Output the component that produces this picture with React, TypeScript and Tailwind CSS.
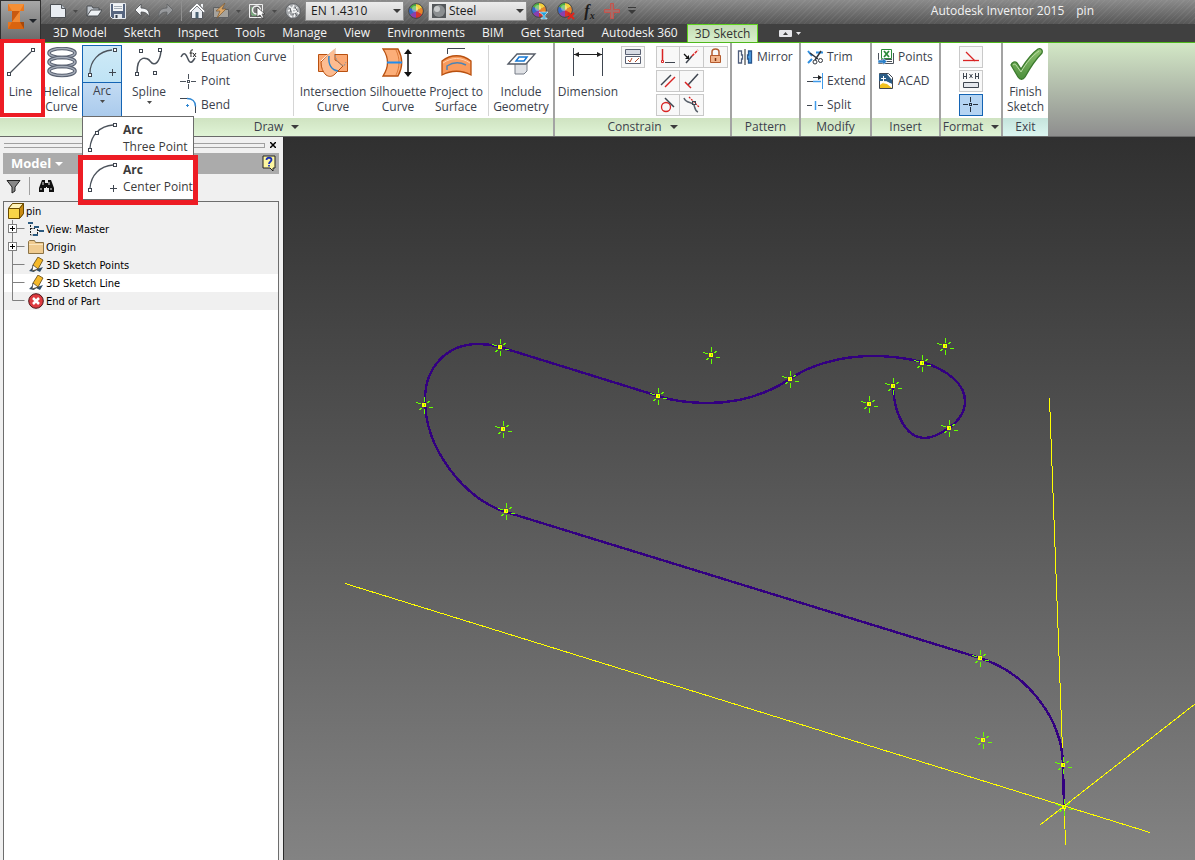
import type { ReactNode } from "react";

type IconProps = { children: ReactNode; w?: number; h?: number };

/** Bare svg wrapper, one unit = one pixel. */
function Icon({ children, w = 16, h = 16 }: IconProps) {
  return (
    <svg width={w} height={h} viewBox={`0 0 ${w} ${h}`} fill="none" className="shrink-0" aria-hidden="true">
      {children}
    </svg>
  );
}

function Caret({ className = "text-[#3c3c3c]" }: { className?: string }) {
  return (
    <svg width="8" height="4" viewBox="0 0 8 4" className={`shrink-0 ${className}`} aria-hidden="true">
      <path d="M0 0h8L4 4z" fill="currentColor" />
    </svg>
  );
}

function SmallCaret({ className = "text-[#4a4a4a]" }: { className?: string }) {
  return (
    <svg width="5" height="3" viewBox="0 0 5 3" className={`shrink-0 ${className}`} aria-hidden="true">
      <path d="M0 0h5L2.5 3z" fill="currentColor" />
    </svg>
  );
}

/* ---------- quick access icons ---------- */

function ColorWheel({ badge }: { badge?: "filter" | "clear" }) {
  const size = badge ? 18 : 16;
  return (
    <Icon w={size} h={size}>
      <path d="M8 8V1a7 7 0 0 1 6 3.5z" fill="#f4d13a" />
      <path d="M8 8l6-3.5a7 7 0 0 1 0 7z" fill="#e8862a" />
      <path d="M8 8l6 3.5A7 7 0 0 1 8 15z" fill="#d8342c" />
      <path d="M8 8v7a7 7 0 0 1-6-3.5z" fill="#8a3fb0" />
      <path d="M8 8l-6 3.5a7 7 0 0 1 0-7z" fill="#3569c9" />
      <path d="M8 8L2 4.5A7 7 0 0 1 8 1z" fill="#4caf3f" />
      <circle cx="8" cy="8" r="7.4" stroke="#3c3c3c" strokeWidth="0.8" />
      <circle cx="7" cy="6" r="3" fill="#fff" opacity="0.35" />
      {badge === "filter" && (
        <path d="M8 10h9l-3 3v3h2v1h-6v-1h2v-3z" fill="#25a5de" stroke="#e9f6fc" strokeWidth="0.6" />
      )}
      {badge === "clear" && <path d="M11 11l6 6M17 11l-6 6" stroke="#e2231a" strokeWidth="2" />}
    </Icon>
  );
}

const quickIcons: Record<string, ReactNode> = {
  New: (
    <Icon>
      <path d="M0.5 1.5h11l4 4v9h-15z" fill="#e9edf2" stroke="#4b4e52" />
      <path d="M11.5 1.5v4h4" stroke="#55585c" fill="#b9c0c8" />
    </Icon>
  ),
  Open: (
    <Icon>
      <path d="M1 13V3h5l1 2h6v3" fill="#c3c9d0" stroke="#4b4e52" />
      <path d="M1 13l4-6h11l-4 6z" fill="#eef1f4" stroke="#4b4e52" />
    </Icon>
  ),
  Save: (
    <Icon>
      <path d="M0.5 0.5h15v15h-13l-2-2z" fill="#56657f" stroke="#e8ebef" />
      <path d="M3 1h10v7H3z" fill="#f2f4f6" />
      <path d="M4 3.5h8M4 5.5h8" stroke="#a3abb5" />
      <path d="M4 11h8v4H4z" fill="#dfe4ea" />
      <path d="M5.5 12h2v3h-2z" fill="#333c4b" />
    </Icon>
  ),
  Undo: (
    <Icon>
      <path d="M1 7l6-6v4c6 0 9 3 8 9-1-3-3-5-8-5v4z" fill="#f4f6f8" stroke="#4b4e52" strokeWidth="0.8" />
    </Icon>
  ),
  Redo: (
    <Icon>
      <path d="M15 7L9 1v4c-6 0-9 3-8 9 1-3 3-5 8-5v4z" fill="#97999c" stroke="#606265" strokeWidth="0.8" />
    </Icon>
  ),
  Home: (
    <Icon>
      <path d="M2.5 8v7.500h11V8L8 3z" fill="#e9ecf1" stroke="#54585e" />
      <path d="M8 0L0 8l1 2 7-7 7 7 1-2z" fill="#fff" stroke="#54585e" strokeWidth="0.6" />
      <path d="M12 1h2v4l-2-2z" fill="#f2f4f7" />
      <path d="M6.5 9h3v6h-3z" fill="#4b6273" />
    </Icon>
  ),
  Update: (
    <Icon>
      <path d="M0.500 4.5h6l1 2h8v8h-15z" fill="#a5a29c" stroke="#5e6063" />
      <path d="M12 0L3 8h4l-3 7 9-9H9z" fill="#dda867" stroke="#7b5a34" strokeWidth="0.7" />
    </Icon>
  ),
  Select: (
    <Icon>
      <path d="M0.5 1.5h13v13h-13z" stroke="#f0f0f0" />
      <path d="M3 4v8h6" stroke="#7fd486" />
      <circle cx="7.5" cy="7" r="4" stroke="#f3f3f3" strokeWidth="1.5" />
      <path d="M8 4l8 7h-3l2 4h-2l-2-3-3 2z" fill="#fff" stroke="#333" strokeWidth="0.7" />
    </Icon>
  ),
  Material: (
    <Icon>
      <circle cx="8" cy="8" r="7.400" fill="#a8abae" stroke="#55585c" strokeWidth="0.8" />
      <path
        d="M4 3l3 3M9 2L7 6l5 1M3 8l4-2 1 4-4 2M8 10l4-2 2 3M9 14l1-3M12 4l-1 3M5 13l2 1"
        stroke="#f3f4f5"
        strokeWidth="1.5"
      />
      <path d="M5 5l1 4M10 4l3 5M5 11h4M10 10l2 3" stroke="#5e6266" />
    </Icon>
  ),
  Appearance: <ColorWheel />,
};

function QuickButton({ name, caret }: { name: string; caret?: boolean }) {
  return (
    <button type="button" aria-label={name} className="flex h-5 items-center gap-[7px]">
      {quickIcons[name]}
      {caret && <SmallCaret />}
    </button>
  );
}

function ComboBox({ label, value, swatch }: { label: string; value: string; swatch?: boolean }) {
  return (
    <div className="relative flex h-5 w-[99px] items-center border border-[#8d8d8d] bg-gradient-to-b from-[#ececec] to-[#cfcfcf]">
      {swatch && (
        <svg width="14" height="14" viewBox="0 0 14 14" className="ml-[3px] shrink-0" aria-hidden="true">
          <rect width="14" height="14" fill="#55585b" />
          <circle cx="7" cy="7" r="6" fill="#8b8e90" />
          <circle cx="5" cy="5" r="3" fill="#c9cbcc" />
        </svg>
      )}
      <select
        aria-label={label}
        className={`h-4 w-full appearance-none bg-transparent text-xs leading-4 text-[#1c1c1c] outline-none ${swatch ? "pl-[3px]" : "pl-[5px]"}`}
      >
        <option>{value}</option>
      </select>
      <span className="pointer-events-none absolute top-[7px] right-0.5">
        <Caret />
      </span>
    </div>
  );
}

function QuickAccessBar() {
  return (
    <div className="flex h-6 items-center bg-[repeating-linear-gradient(135deg,rgba(255,255,255,0.05)_0px,rgba(255,255,255,0.05)_1px,transparent_1px,transparent_4px),linear-gradient(#8b8b8b,#565656)] pb-0.5 pl-[9px]">
      <div className="flex items-center gap-2">
        <QuickButton name="New" caret />
        <QuickButton name="Open" />
        <QuickButton name="Save" />
        <QuickButton name="Undo" />
        <QuickButton name="Redo" />
        <span className="-mx-px h-5 w-px bg-[#8f8f8f]" />
        <QuickButton name="Home" />
        <QuickButton name="Update" caret />
        <QuickButton name="Select" caret />
        <QuickButton name="Material" />
      </div>
      <div className="ml-1 flex items-center gap-1">
        <ComboBox label="Material" value="EN 1.4310" />
        <QuickButton name="Appearance" />
        <ComboBox label="Appearance" value="Steel" swatch />
      </div>
      <div className="ml-1 flex items-center gap-2">
        <button type="button" aria-label="Adjust">
          <ColorWheel badge="filter" />
        </button>
        <button type="button" aria-label="Clear">
          <ColorWheel badge="clear" />
        </button>
        <button
          type="button"
          className="w-[13px] font-['Liberation_Serif',serif] text-base leading-4 font-bold text-[#1c1c1c] italic"
        >
          f<sub className="text-[10px]">x</sub>
        </button>
        <button type="button" aria-label="Add">
          <Icon>
            <path d="M6.5 0.5h3v6h6v3h-6v6h-3v-6h-6v-3h6z" fill="#a0706c" stroke="#c4534c" />
          </Icon>
        </button>
        <button type="button" aria-label="More">
          <Icon w={8} h={8}>
            <path d="M0 0.5h8" stroke="#3a3a3a" />
            <path d="M0 3h8L4 7z" fill="#3a3a3a" />
          </Icon>
        </button>
      </div>
      <p className="mr-[101px] ml-auto flex gap-3 text-xs whitespace-nowrap text-[#f2f2f2]">
        <span>Autodesk Inventor 2015</span>
        <span>pin</span>
      </p>
    </div>
  );
}

const tabs = [
  "3D Model",
  "Sketch",
  "Inspect",
  "Tools",
  "Manage",
  "View",
  "Environments",
  "BIM",
  "Get Started",
  "Autodesk 360",
];

function TabBar() {
  return (
    <nav className="flex h-[18px] items-end gap-px bg-[#404040] pl-1 text-xs text-[#f4f4f4]">
      {tabs.map((tab) => (
        <button key={tab} type="button" className="h-[18px] px-2 leading-[18px] whitespace-nowrap">
          {tab}
        </button>
      ))}
      <button
        type="button"
        className="h-[18px] border border-b-0 border-[#5fd41f] bg-gradient-to-b from-[#c3dcb4] to-[#daf0cd] px-[7px] leading-4 whitespace-nowrap text-[#333]"
      >
        3D Sketch
      </button>
      <button type="button" aria-label="Minimize ribbon" className="ml-5 flex h-[18px] items-center gap-1">
        <Icon w={13} h={7}>
          <rect width="13" height="7" rx="1" fill="#e6e6ea" />
          <path d="M4 5h5L6.5 2z" fill="#404040" />
        </Icon>
        <SmallCaret className="text-[#e6e6ea]" />
      </button>
    </nav>
  );
}

/* ---------- ribbon ---------- */

const node = { fill: "#fff", stroke: "#3f4650" };

const bigIcons: Record<string, ReactNode> = {
  Line: (
    <Icon w={32} h={32}>
      <path d="M5 26L26 5" stroke="#4c535c" strokeWidth="1.3" />
      <rect x="2.5" y="25.5" width="3" height="3" {...node} />
      <rect x="26.5" y="1.5" width="3" height="3" {...node} />
    </Icon>
  ),
  "Helical Curve": (
    <Icon w={32} h={32}>
      {[6, 15, 24].map((y) => (
        <g key={y}>
          <ellipse cx="16" cy={y} rx="13" ry="4.5" stroke="#596171" strokeWidth="3.6" />
          <ellipse cx="16" cy={y} rx="13" ry="4.5" stroke="#a4abb7" strokeWidth="1.4" />
        </g>
      ))}
    </Icon>
  ),
  Arc: (
    <Icon w={32} h={32}>
      <path d="M4 26C4 14 13 4 26 3" stroke="#4c535c" strokeWidth="1.3" />
      <rect x="2.5" y="26.5" width="3" height="3" {...node} />
      <rect x="27.5" y="1.5" width="3" height="3" {...node} />
      <path d="M23 25.5h7M26.5 22v7" stroke="#3f4650" />
    </Icon>
  ),
  Spline: (
    <Icon w={32} h={32}>
      <path d="M4 26c0-20 11-15 13-12 5 7 10 0 11-10" stroke="#4c535c" strokeWidth="1.5" />
      <rect x="2.5" y="25.5" width="3" height="3" {...node} />
      <rect x="6.5" y="2.5" width="3" height="3" {...node} />
      <rect x="20.5" y="24.5" width="3" height="3" {...node} />
      <rect x="25.5" y="1.5" width="3" height="3" {...node} />
    </Icon>
  ),
  "Intersection Curve": (
    <Icon w={32} h={32}>
      <path d="M1.5 7.5h29v17h-29z" fill="#fba974" stroke="#b8500f" />
      <path d="M4 15L18 1v12c3 1 5 4 8 6l-8 8c-3 3-6 3-9 1-3-3-5-7-5-13z" fill="#fdbc91" stroke="#b8500f" />
      <path d="M4 14L18 1v6" stroke="#fff" />
      <path d="M12 9c-1 9 3 14 9 15" stroke="#2c85cc" strokeWidth="1.5" />
      <path d="M18 8c1 5 4 9 9 11l2-4" stroke="#8d959c" strokeDasharray="2 1" />
    </Icon>
  ),
  "Silhouette Curve": (
    <Icon w={32} h={32}>
      <path d="M1 2h15c5 9 5 18 0 27H1c6-9 6-18 0-27z" fill="#fcae78" stroke="#b8500f" strokeWidth="1.3" />
      <path d="M14 3c4 8 4 17 0 25" stroke="#dc7b3b" />
      <path d="M5 15.5h15" stroke="#1e8df0" strokeWidth="2" />
      <path d="M26 5v22" stroke="#111" strokeWidth="1.5" />
      <path d="M22 7l4-5 4 5zM22 25l4 5 4-5z" fill="#111" />
    </Icon>
  ),
  "Project to Surface": (
    <Icon w={32} h={32}>
      <path d="M7.5 7V1.5H25" stroke="#3f4650" />
      <path d="M2 14c9-7 20-7 29 0v14c-9-5-20-5-29 0z" fill="#f99b5d" stroke="#b8500f" strokeWidth="1.3" />
      <path d="M3 16c9-6 18-6 27 0" stroke="#ffd2b0" />
      <path d="M7 23v-4c6-4 13-4 19-1" stroke="#4d84b4" strokeWidth="1.5" />
    </Icon>
  ),
  "Include Geometry": (
    <Icon w={32} h={32}>
      <path d="M10 16h12v8l-3 3h-9z" fill="#dfe1e5" stroke="#777d87" />
      <path d="M3 17L12 7h18l-9 10z" fill="#fff" stroke="#555c67" strokeWidth="1.3" />
      <path d="M11 14l3-4h8l-3 4z" stroke="#1678d4" strokeWidth="1.5" />
    </Icon>
  ),
  Dimension: (
    <Icon w={32} h={32}>
      <path d="M1.5 1v28M30.5 1v28" stroke="#3f4650" />
      <path d="M2 7.5h28" stroke="#222" />
      <path d="M2 7.5L7 5v5zM30 7.5L25 5v5z" fill="#222" />
    </Icon>
  ),
  "Finish Sketch": (
    <Icon w={34} h={34}>
      <defs>
        <linearGradient id="tick" x1="0" y1="0" x2="0" y2="1">
          <stop offset="0" stopColor="#8cc06d" />
          <stop offset="1" stopColor="#4c8f3c" />
        </linearGradient>
      </defs>
      <path
        d="M2 18c1-3 4-4 6-2l4 6C17 14 22 7 29 2c3-1 5 1 4 4C26 13 21 21 16 30c-2 3-5 3-7 0z"
        fill="url(#tick)"
        stroke="#3b7a2d"
        strokeWidth="1.3"
      />
      <path d="M4 18c1-1 2-1 3 0l5 7C17 16 23 9 30 4" stroke="#b9dba4" />
    </Icon>
  ),
};

function BigButton({ name, width, caret }: { name: string; width: string; caret?: boolean }) {
  return (
    <button type="button" className={`flex shrink-0 flex-col items-center pt-1 ${width}`}>
      <span className="flex h-[37px] items-start">{bigIcons[name]}</span>
      <span className="text-xs leading-[15px] text-[#3b3f4c]">{name}</span>
      {caret && (
        <span className="pt-0.5">
          <SmallCaret />
        </span>
      )}
    </button>
  );
}

const rowIcons: Record<string, ReactNode> = {
  "Equation Curve": (
    <Icon w={17}>
      <path d="M1 8c3-6 5-3 7 2s4 4 7-1" stroke="#4c535c" strokeWidth="1.5" />
      <path d="M13 1c-3-1-2 2-2 7M9.5 4h3M13 4l3 4M16 4l-3 4" stroke="#222" />
    </Icon>
  ),
  Point: (
    <Icon w={17}>
      <path d="M0 8.5h6M11 8.5h5M8.5 1v5M8.5 11v5" stroke="#4c535c" />
      <rect x="7.5" y="7.5" width="2" height="2" stroke="#4c535c" />
    </Icon>
  ),
  Bend: (
    <Icon w={17}>
      <path d="M0 1.5h7M15.5 9v7" stroke="#3f4650" />
      <path d="M7 1.5c5 0 8.5 3 8.5 8" stroke="#2f86d2" strokeWidth="1.5" />
      <path d="M6 8.5h3M7.5 7v3" stroke="#2f86d2" />
    </Icon>
  ),
  Mirror: (
    <Icon>
      <path d="M1.5 2h3v4h1v4h-1v4h-3z" stroke="#4f5e7c" strokeWidth="1.3" />
      <path d="M8 0v16" stroke="#222" />
      <path d="M14.5 2h-3v4h-1v4h1v4h3z" fill="#4b9be0" stroke="#27568f" strokeWidth="1.3" />
    </Icon>
  ),
  Trim: (
    <Icon>
      <path d="M1 2l4 5M9 3.5h7M1 14l4-4" stroke="#2f8fe0" strokeWidth="2" />
      <path d="M3 4l8 6M14 2L8 11" stroke="#30353c" strokeWidth="1.5" />
      <circle cx="8" cy="13" r="2" stroke="#30353c" />
      <circle cx="13.5" cy="11.5" r="2" stroke="#30353c" />
    </Icon>
  ),
  Extend: (
    <Icon>
      <path d="M0 8.5h6M6 4.5h6" stroke="#3f4650" />
      <path d="M6 8.5h8" stroke="#3f9bea" strokeWidth="1.5" />
      <path d="M11 2l4 2.5L11 7z" fill="#222" />
      <path d="M15.5 0v16" stroke="#3f9bea" />
    </Icon>
  ),
  Split: (
    <Icon>
      <path d="M0 8.5h5M11 8.5h5" stroke="#3f4650" />
      <path d="M8.5 4v9" stroke="#3f9bea" strokeWidth="1.5" />
    </Icon>
  ),
  Points: (
    <Icon>
      <path d="M0.5 4v10.500h15V4M3 10.5h11M3 12.5h11" stroke="#4c535c" />
      <path d="M3.5 0.5h10v9h-10z" fill="#fff" stroke="#2b8a3a" />
      <path d="M6 2l5 6M11 2L6 8" stroke="#2b8a3a" strokeWidth="1.8" />
      <path d="M0 11h5V9l4 3.500-4 3.500v-2H0z" fill="#2c7fc8" stroke="#fff" strokeWidth="0.5" />
    </Icon>
  ),
  ACAD: (
    <Icon>
      <path d="M1.5 0.5h9l4 4v11h-13z" fill="#fff" stroke="#3f4650" />
      <path d="M1 1h8l5 6v4L6 8H1z" fill="#2b5d86" />
      <path d="M2 12l4-3 8 3v3H2z" fill="#f1c21f" />
      <path d="M4 10l5 1 5 4V11L8 8z" fill="#fff" />
      <path d="M3 5.500h5M5.5 3v5" stroke="#fff" />
    </Icon>
  ),
};

function RowButton({ name }: { name: string }) {
  return (
    <button type="button" className="flex h-6 items-center gap-1 text-xs whitespace-nowrap text-[#3b3f4c]">
      {rowIcons[name]}
      {name}
    </button>
  );
}

const toolIcons: Record<string, ReactNode> = {
  Constraints: (
    <>
      <path d="M4.5 3.5h15v5h-15z" fill="#d8dce4" stroke="#596072" />
      <path d="M4.5 10.5h15v7h-15z" fill="#fff" stroke="#596072" />
      <path d="M7 14l2 2 2-4M14 16l4-4" stroke="#b04a2a" />
    </>
  ),
  Coincident: (
    <>
      <path d="M6.5 3v11" stroke="#d92323" strokeWidth="1.5" />
      <path d="M5.5 14.5h2v2h-2z" stroke="#d92323" />
      <path d="M9 16.5h10" stroke="#3f4650" />
    </>
  ),
  Collinear: (
    <>
      <path d="M6 17l6-7" stroke="#3f4650" strokeWidth="1.5" />
      <path d="M12 10l6-6" stroke="#d92323" strokeWidth="1.5" strokeDasharray="3 1" />
      <path d="M4 8l4 4" stroke="#111" strokeWidth="1.3" />
      <path d="M9 9v4H5z" fill="#111" />
    </>
  ),
  Fix: (
    <>
      <path d="M8 10V6c0-4 7-4 7 0v4" stroke="#b45a2d" strokeWidth="1.5" />
      <path d="M6.5 9.5h10v7h-10z" fill="#f2b48c" stroke="#b45a2d" />
      <path d="M11.5 12v3" stroke="#7c3510" strokeWidth="1.5" />
    </>
  ),
  Parallel: (
    <>
      <path d="M5 15L15 5" stroke="#3f4650" strokeWidth="1.5" />
      <path d="M9 17L19 7" stroke="#d92323" strokeWidth="1.5" />
    </>
  ),
  Perpendicular: (
    <>
      <path d="M8 15L18 4" stroke="#3f4650" strokeWidth="1.5" />
      <path d="M5 12l6 6" stroke="#d92323" strokeWidth="1.5" />
    </>
  ),
  Tangent: (
    <>
      <circle cx="10" cy="13" r="4.5" stroke="#d92323" strokeWidth="1.3" />
      <path d="M9 4l9 9" stroke="#3f4650" strokeWidth="1.5" />
    </>
  ),
  Smooth: (
    <>
      <path d="M4 4c2 6 8 3 10 7 1 3 1 6 4 7" stroke="#5a616b" strokeWidth="1.5" />
      <path d="M9 3l10 10" stroke="#d92323" strokeWidth="1.3" strokeDasharray="2 1" />
      <rect x="12.5" y="7.5" width="3" height="3" stroke="#3f4650" />
    </>
  ),
  Construction: (
    <>
      <path d="M4 14.5h16" stroke="#d92323" strokeWidth="1.3" />
      <path d="M7 6l9 9" stroke="#d92323" strokeWidth="1.3" />
    </>
  ),
  "Driven Dimension": (
    <>
      <path d="M4.5 3v6M4.5 6.5h3M7.5 3v6M19.5 3v6M16.5 6.5h3M16.5 3v6M10.5 4l3 4M13.5 4l-3 4" stroke="#3f4650" />
      <path d="M4.5 12.5h15v5h-15z" fill="#e4e7ec" stroke="#3f4650" />
    </>
  ),
  "Center Point": (
    <>
      <path d="M4 10.5h5M14 10.5h5M11.5 3v5M11.5 13v5" stroke="#25303d" />
      <rect x="10.5" y="9.5" width="2" height="2" stroke="#25303d" />
    </>
  ),
};

function ToolButton({ name, active, joined }: { name: string; active?: boolean; joined?: boolean }) {
  const tone = active ? "border-[#1464b4] bg-[#b5d4f2]" : "border-[#c9c9c9] bg-[#f8f8f8]";
  return (
    <button
      type="button"
      aria-label={name}
      className={`flex h-[22px] w-6 items-center justify-center border ${tone} ${joined ? "border-l-0" : ""}`}
    >
      <Icon w={22} h={20}>
        <g transform="translate(-1 -1)">{toolIcons[name]}</g>
      </Icon>
    </button>
  );
}

type PanelProps = { title: string; width: string; caret?: boolean; exit?: boolean; children: ReactNode };

function Panel({ title, width, caret, exit, children }: PanelProps) {
  return (
    <section className={`flex shrink-0 flex-col bg-white ${exit ? "" : "border-r-2 border-[#a3a3a3]"} ${width}`}>
      <div className="flex h-[75px]">{children}</div>
      <h2
        className={`flex h-[18px] items-center justify-center gap-2 text-xs text-[#3b3f4c] ${
          exit ? "bg-gradient-to-b from-[#c5e4dc] to-[#dcf6f0]" : "bg-gradient-to-b from-[#cfe3c1] to-[#e0f4d6]"
        }`}
      >
        {title}
        {caret && <Caret />}
      </h2>
    </section>
  );
}

function ArcMenuItem({ label, center }: { label: string; center?: boolean }) {
  return (
    <button type="button" role="menuitem" className="flex h-10 w-full items-center gap-1 pl-1 text-left text-xs">
      <Icon w={32} h={32}>
        <path d="M3 26C4 13 13 4 26 3" stroke="#4c535c" strokeWidth="1.3" />
        <rect x="1.5" y="26.5" width="3" height="3" {...node} />
        <rect x="26.5" y="1.5" width="3" height="3" {...node} />
        {center ? (
          <path d="M23 26.5h7M26.5 23v7" stroke="#3f4650" />
        ) : (
          <rect x="8.5" y="9.5" width="3" height="3" {...node} />
        )}
      </Icon>
      <span className="leading-[17px] whitespace-nowrap">
        <b className="block">Arc</b>
        {label}
      </span>
    </button>
  );
}

function ArcSplitButton() {
  return (
    <div className="relative mt-0.5 flex h-[73px] w-10 shrink-0 flex-col border border-b-0 border-[#1464b4]">
      <button
        type="button"
        aria-label="Arc center point"
        className="flex h-[37px] items-start justify-center border-b border-[#1464b4] bg-gradient-to-b from-[#cfeaf7] to-[#bfe3f5] pt-px"
      >
        {bigIcons.Arc}
      </button>
      <button
        type="button"
        className="flex flex-1 flex-col items-center bg-gradient-to-b from-[#c3dbf3] to-[#a9caec] text-xs leading-[15px] text-[#3b3f4c]"
      >
        Arc
        <span className="pt-0.5">
          <SmallCaret />
        </span>
      </button>
      <div
        role="menu"
        className="absolute top-[70px] -left-px z-20 w-28 border border-[#6b6b6b] bg-white py-px text-[#3b3b3b]"
      >
        <ArcMenuItem label="Three Point" />
        <ArcMenuItem label="Center Point" center />
        <span className="pointer-events-none absolute -inset-x-[5px] top-[38px] -bottom-1.5 border-5 border-[#ed1c24]" />
      </div>
    </div>
  );
}

function Ribbon() {
  return (
    <div className="relative flex h-[94px] border-t border-[#4fb81c] bg-gradient-to-b from-[#d3e8c6] to-[#8e8e8e]">
      <Panel title="Draw" width="w-[555px]" caret>
        <div className="relative flex">
          <BigButton name="Line" width="w-[41px]" />
          <span className="pointer-events-none absolute -top-1 left-0 z-10 h-[78px] w-[45px] border-4 border-[#ed1c24]" />
        </div>
        <BigButton name="Helical Curve" width="w-[41px]" />
        <ArcSplitButton />
        <BigButton name="Spline" width="w-[54px]" caret />
        <div className="flex w-[117px] flex-col pt-0.5 pl-1">
          <RowButton name="Equation Curve" />
          <RowButton name="Point" />
          <RowButton name="Bend" />
        </div>
        <span className="my-0.5 w-px bg-[#d5d5d5]" />
        <BigButton name="Intersection Curve" width="w-[78px]" />
        <BigButton name="Silhouette Curve" width="w-[52px]" />
        <BigButton name="Project to Surface" width="w-16" />
        <span className="my-0.5 w-px bg-[#d5d5d5]" />
        <BigButton name="Include Geometry" width="w-16" />
      </Panel>
      <Panel title="Constrain" width="w-[177px]" caret>
        <BigButton name="Dimension" width="w-[66px]" />
        <div className="pt-[3px]">
          <ToolButton name="Constraints" />
        </div>
        <div className="ml-[11px] flex flex-col gap-0.5 pt-[3px]">
          <div className="flex">
            <ToolButton name="Coincident" />
            <ToolButton name="Collinear" joined />
            <ToolButton name="Fix" joined />
          </div>
          <div className="flex">
            <ToolButton name="Parallel" />
            <ToolButton name="Perpendicular" joined />
          </div>
          <div className="flex">
            <ToolButton name="Tangent" />
            <ToolButton name="Smooth" joined />
          </div>
        </div>
      </Panel>
      <Panel title="Pattern" width="w-[69px]">
        <div className="pt-0.5 pl-[5px]">
          <RowButton name="Mirror" />
        </div>
      </Panel>
      <Panel title="Modify" width="w-[71px]">
        <div className="pt-0.5 pl-1.5">
          <RowButton name="Trim" />
          <RowButton name="Extend" />
          <RowButton name="Split" />
        </div>
      </Panel>
      <Panel title="Insert" width="w-[69px]">
        <div className="pt-0.5 pl-1.5">
          <RowButton name="Points" />
          <RowButton name="ACAD" />
        </div>
      </Panel>
      <Panel title="Format" width="w-[62px]" caret>
        <div className="flex flex-col gap-0.5 pt-[3px] pl-[18px]">
          <ToolButton name="Construction" />
          <ToolButton name="Driven Dimension" />
          <ToolButton name="Center Point" active />
        </div>
      </Panel>
      <Panel title="Exit" width="w-[45px]" exit>
        <BigButton name="Finish Sketch" width="w-[45px]" />
      </Panel>
    </div>
  );
}

/* ---------- model browser ---------- */

const treeIcons: Record<string, ReactNode> = {
  part: (
    <Icon>
      <path d="M0.5 5.5l4-5h11v10l-4 5h-11z" fill="#f9d548" stroke="#6b4b00" />
      <path d="M0.5 5.5l4-5h11l-4 5z" fill="#fff3b8" stroke="#6b4b00" />
      <path d="M11.5 5.5v10l4-5v-10z" fill="#c98a10" stroke="#6b4b00" />
    </Icon>
  ),
  view: (
    <Icon>
      <path d="M2.5 4v10H5M2.5 7.5H7M9.5 5v8M9.5 9.5H11" stroke="#222" strokeDasharray="2 1" />
      <path d="M0 1h5v2H0zM6 5h5v2H6zM11 9h5v2h-5zM5 13h5v2H5z" fill="#2b5a80" />
    </Icon>
  ),
  folder: (
    <Icon>
      <path d="M0.5 14.5v-12l1-1h5l1 2h8v11z" fill="#efcb90" stroke="#8b7346" />
      <path d="M1 5.5h14" stroke="#fbe6bf" />
    </Icon>
  ),
  sketch: (
    <Icon>
      <path d="M1 14l5-5 3 3 6-2-3 5-4-2-2 2z" fill="#31506d" />
      <path d="M5 8l5-8 5 3-5 9-5 2z" fill="#f5b92a" stroke="#5b4312" strokeWidth="0.8" />
      <path d="M5 8l5 4-6 2z" fill="#fff" stroke="#333" strokeWidth="0.7" />
    </Icon>
  ),
  end: (
    <Icon>
      <circle cx="8" cy="8" r="7.3" fill="#dd3a3f" stroke="#4d1418" />
      <path d="M5 5l6 6M11 5l-6 6" stroke="#fff" strokeWidth="2.5" />
    </Icon>
  ),
};

type TreeItem = { label: string; icon: string; branch?: "open" | "leaf" | "last"; selected?: boolean };

const tree: TreeItem[] = [
  { label: "pin", icon: "part" },
  { label: "View: Master", icon: "view", branch: "open" },
  { label: "Origin", icon: "folder", branch: "open" },
  { label: "3D Sketch Points", icon: "sketch", branch: "leaf" },
  { label: "3D Sketch Line", icon: "sketch", branch: "leaf", selected: true },
  { label: "End of Part", icon: "end", branch: "last" },
];

function TreeRow({ label, icon, branch, selected }: TreeItem) {
  return (
    <li
      className={`flex h-[18px] items-center gap-0.5 ${selected ? "bg-white" : "bg-[#f0f0f0]"} ${branch ? "" : "pl-1"}`}
    >
      {branch && (
        <svg width="22" height="18" viewBox="0 0 22 18" fill="none" className="shrink-0" aria-hidden="true">
          <path d={branch === "last" ? "M8.5 0v8.5h12" : "M8.5 0v18M8.5 8.5h12"} stroke="#808080" />
          {branch === "open" && (
            <>
              <rect x="4.5" y="4.5" width="8" height="8" fill="#fff" stroke="#808080" />
              <path d="M6 8.5h5M8.5 6v5" stroke="#000" />
            </>
          )}
        </svg>
      )}
      {treeIcons[icon]}
      <span className="pt-0.5">{label}</span>
    </li>
  );
}

function ModelBrowser() {
  return (
    <aside className="flex w-[283px] shrink-0 flex-col bg-[#f0f0f0] pr-1 pl-[3px]">
      <div className="flex h-4 items-center justify-between pr-[3px] pl-px">
        <span className="h-[5px] w-[261px] border-y border-r border-[#a0a0a0]" />
        <button type="button" aria-label="Close browser">
          <Icon w={6} h={6}>
            <path d="M0 0l6 6M6 0L0 6" stroke="#000" strokeWidth="1.5" />
          </Icon>
        </button>
      </div>
      <div className="flex h-[21px] items-center justify-between bg-[#ababab] pr-[3px] pl-2">
        <button type="button" className="flex items-center gap-1 text-[13px] font-bold text-white">
          Model
          <Caret className="text-white" />
        </button>
        <button type="button" aria-label="Help" className="-mt-0.5">
          <Icon w={14}>
            <path d="M1 1h12v12h-2v3l-3-3H1z" fill="#fdf6a0" stroke="#222" />
            <path d="M4.5 5c0-3 5-3 5 0 0 1.500-2.500 1.500-2.500 4M7 10v1.500" stroke="#1a2fb8" strokeWidth="1.8" />
          </Icon>
        </button>
      </div>
      <div className="flex h-[27px] items-center gap-2 pb-1 pl-[3px]">
        <button type="button" aria-label="Filter">
          <Icon w={15}>
            <path d="M1 2.500h13L9 9v4l-3 2V9z" fill="#888" stroke="#222" />
          </Icon>
        </button>
        <span className="h-[18px] w-px bg-[#a0a0a0]" />
        <button type="button" aria-label="Find">
          <Icon w={17}>
            <path d="M4 2h3v3h3V2h3l3 8v4h-5v-4H9V9H8v1H6v4H1v-4z" fill="#111" />
            <path d="M3 10v2M13 10v2M5 4v3M11 4v3" stroke="#eee" />
          </Icon>
        </button>
      </div>
      <ul className="flex-1 border border-b-0 border-[#6d6d6d] bg-white font-['DejaVu_Sans_Condensed','DejaVu_Sans',sans-serif] text-[11px] text-black">
        {tree.map((item) => (
          <TreeRow key={item.label} {...item} />
        ))}
      </ul>
    </aside>
  );
}

/* ---------- viewport ---------- */

const sketchPoints = [
  [500, 347], [424, 405], [503, 429], [506, 511], [658, 396], [711, 355], [790, 379], [869, 404],
  [893, 386], [922, 363], [945, 346], [949, 428], [980, 658], [983, 740], [1063, 765], [1064, 807],
];

function Viewport() {
  return (
    <main className="relative min-h-[723px] flex-1 border-l border-[#2a2a2a] bg-gradient-to-b from-[#303030] to-[#838383]">
      <svg
        viewBox="284 137 911 723"
        preserveAspectRatio="xMinYMin meet"
        fill="none"
        shapeRendering="crispEdges"
        className="absolute inset-0 h-full w-full"
        role="img"
        aria-label="3D sketch of the pin"
      >
        <path d="M1049.5 398L1062.500 750L1065.500 845M345 583.5L1150 832.5M1040 825L1195 704" stroke="#ffff00" />
        <path
          d="M1064 806L1063 766C1063 722 1030 674 980 658L506 512C463 499 425 447 425 400C425 366 448 344 478 344C486 344 493 345 500 347L658 396C673 401 690 403 708 403C742 403 770 392 790 379C810 365 840 356 873 356C895 356 910 359 922 362C948 370 965 384 965 401C965 412 960 420 949 428C940 434 933 438 925 438C905 438 894 412 893 387"
          stroke="#330080"
          strokeWidth="2.4"
        />
        {sketchPoints.map(([x, y]) => (
          <g key={`${x}-${y}`} transform={`translate(${x} ${y})`}>
            <path d="M0.5-8v5M0.5 4v5M-8-2.500l5 1.500M5 2l4 1M3-2l3-2M-2 3l-3 2" stroke="#66ff00" />
            <rect x="-2" y="-2" width="4" height="4" fill="#ffff00" />
            <rect x="0" y="-1" width="1" height="2" fill="#66ff00" />
          </g>
        ))}
      </svg>
    </main>
  );
}

export default function App() {
  return (
    <div className="flex min-h-screen flex-col bg-[#404040] font-['Open_Sans','Noto_Sans',sans-serif]">
      <header>
        <div className="flex">
          <button
            type="button"
            aria-label="Application menu"
            className="flex h-[42px] w-[41px] shrink-0 items-start gap-1 border border-[#2f2f2f] bg-gradient-to-b from-[#a8a8a8] to-[#6a6a6a] pt-0.5 pl-1.5"
          >
            <Icon w={18} h={28}>
              <path d="M1 1h16v7h-4v11h4v7H1v-7h4V8H1z" fill="#e8761d" />
              <path d="M1 1h16l-4 7H5z" fill="#f58f35" />
              <path d="M5 8h8l-8 11z" fill="#c9590f" />
              <path d="M13 8v11H5z" fill="#f08a35" />
              <path d="M1 26l4-7h8l4 7z" fill="#d9640f" />
              <path d="M17 19v7l-4-7z" fill="#a8480a" />
            </Icon>
            <span className="pt-4">
              <Caret className="text-[#1f2329]" />
            </span>
          </button>
          <div className="min-w-0 flex-1">
            <QuickAccessBar />
            <TabBar />
          </div>
        </div>
        <Ribbon />
      </header>
      <div className="flex flex-1 border-t border-[#6a6a6a]">
        <ModelBrowser />
        <Viewport />
      </div>
    </div>
  );
}
